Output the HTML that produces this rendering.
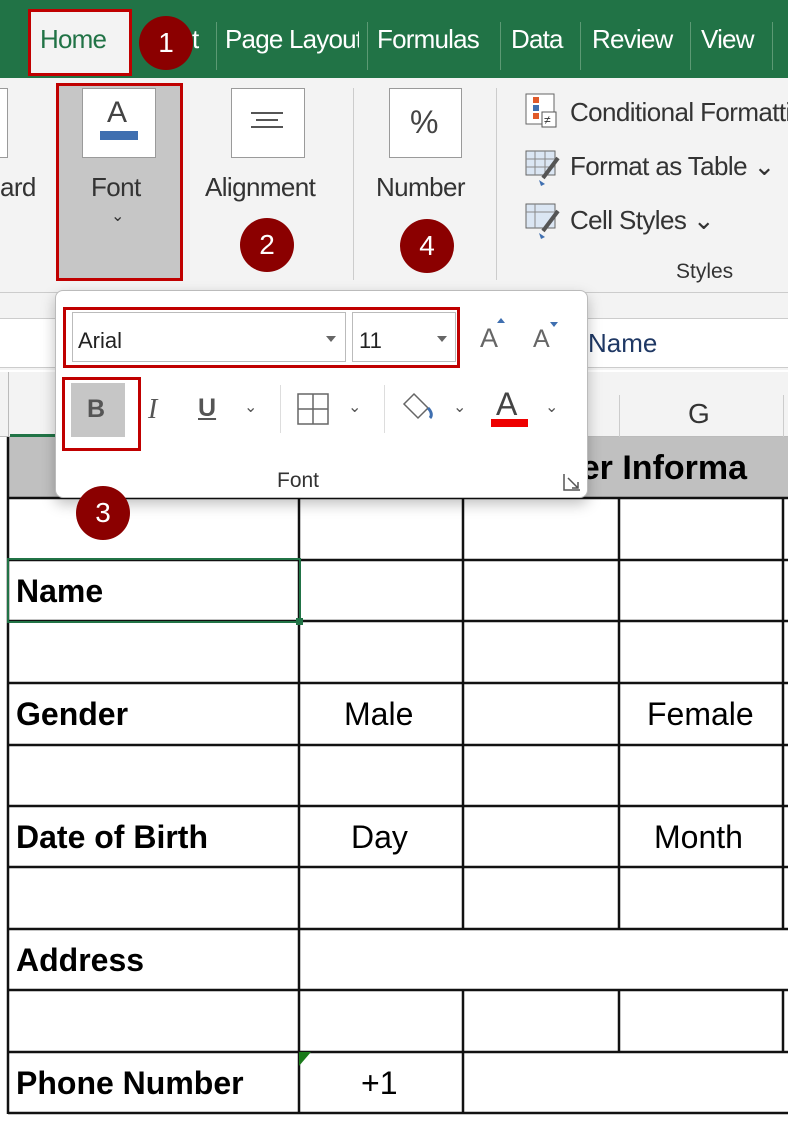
<!DOCTYPE html>
<html><head><meta charset="utf-8"><style>
*{margin:0;padding:0;box-sizing:border-box}
body{width:788px;height:1123px;position:relative;overflow:hidden;background:#fff;font-family:"Liberation Sans",Arial,sans-serif}
.a{position:absolute}
.tab{position:absolute;top:24px;color:#fff;font-size:26px;letter-spacing:-0.8px}
.sep{position:absolute;top:22px;width:1px;height:48px;background:#5c9a74}
.rl{position:absolute;font-size:26px;color:#333;letter-spacing:-0.6px}
.box{position:absolute;background:#fff;border:1px solid #9a9a9a}
.red{position:absolute;border:3px solid #c00000}
.circ{position:absolute;width:54px;height:54px;border-radius:50%;background:#8b0000;color:#fff;font-size:28px;text-align:center;line-height:54px}
.cell{position:absolute;font-size:32px;color:#000}
.b{font-weight:bold}
</style></head><body>
<!-- tab bar -->
<div class="a" style="left:0;top:0;width:788px;height:78px;background:#217346"></div>
<div class="a" style="left:29px;top:10px;width:100px;height:66px;background:#f3f3f3"></div>
<div class="tab" style="left:40px;color:#217346">Home</div>
<div class="red" style="left:28px;top:9px;width:104px;height:67px;border-width:3px"></div>
<div class="tab" style="left:192px">t</div>
<div class="sep" style="left:216px"></div>
<div class="tab" style="left:225px;width:134px;overflow:hidden;white-space:nowrap">Page Layout</div>
<div class="sep" style="left:367px"></div>
<div class="tab" style="left:377px">Formulas</div>
<div class="sep" style="left:500px"></div>
<div class="tab" style="left:511px">Data</div>
<div class="sep" style="left:580px"></div>
<div class="tab" style="left:592px">Review</div>
<div class="sep" style="left:690px"></div>
<div class="tab" style="left:701px">View</div>
<div class="sep" style="left:772px"></div>
<div class="circ" style="left:139px;top:16px">1</div>
<!-- ribbon -->
<div class="a" style="left:0;top:78px;width:788px;height:214px;background:#f3f3f3"></div>
<div class="box" style="left:-2px;top:88px;width:10px;height:70px"></div>
<div class="rl" style="left:0;top:172px">ard</div>
<div class="a" style="left:56px;top:84px;width:126px;height:196px;background:#c6c6c6"></div>
<div class="box" style="left:82px;top:88px;width:74px;height:70px"></div>
<div class="a" style="left:107px;top:96px;font-size:30px;color:#444">A</div>
<div class="a" style="left:100px;top:131px;width:38px;height:9px;background:#3f6fb0"></div>
<div class="rl" style="left:91px;top:172px">Font</div>
<div class="rl" style="left:111px;top:206px;font-size:16px">&#8964;</div>
<div class="red" style="left:56px;top:83px;width:127px;height:198px"></div>
<div class="box" style="left:231px;top:88px;width:74px;height:70px"></div>
<div class="a" style="left:251px;top:112px;width:32px;height:2px;background:#555"></div>
<div class="a" style="left:256px;top:119px;width:22px;height:2px;background:#555"></div>
<div class="a" style="left:251px;top:126px;width:32px;height:2px;background:#555"></div>
<div class="rl" style="left:205px;top:172px">Alignment</div>
<div class="circ" style="left:240px;top:218px">2</div>
<div class="a" style="left:353px;top:88px;width:1px;height:192px;background:#ccc"></div>
<div class="box" style="left:389px;top:88px;width:73px;height:70px"></div>
<div class="a" style="left:410px;top:104px;font-size:32px;color:#444">%</div>
<div class="rl" style="left:376px;top:172px">Number</div>
<div class="circ" style="left:400px;top:219px">4</div>
<div class="a" style="left:496px;top:88px;width:1px;height:192px;background:#ccc"></div>
<svg class="a" style="left:525px;top:93px" width="36" height="36"><rect x="1" y="1" width="28" height="30" fill="#fff" stroke="#666"/><rect x="8" y="4" width="6" height="6" fill="#e05a2a"/><rect x="8" y="12" width="6" height="6" fill="#3f6fb0"/><rect x="8" y="20" width="6" height="6" fill="#e05a2a"/><rect x="17" y="19" width="14" height="15" fill="#fff" stroke="#555"/><text x="19" y="31" font-size="12" fill="#333">≠</text></svg>
<div class="rl" style="left:570px;top:97px;white-space:nowrap">Conditional Formatting</div>
<svg class="a" style="left:525px;top:150px" width="36" height="36"><rect x="1" y="1" width="29" height="24" fill="#dbe6f3" stroke="#666"/><path d="M1 9h29M1 17h29M10 1v24M20 1v24" stroke="#888"/><path d="M33 8L18 28" stroke="#555" stroke-width="4"/><path d="M14 30l6 4-4 2z" fill="#3f6fb0"/></svg>
<div class="rl" style="left:570px;top:151px;white-space:nowrap">Format as Table &#8964;</div>
<svg class="a" style="left:525px;top:203px" width="36" height="36"><rect x="1" y="1" width="29" height="24" fill="#dbe6f3" stroke="#666"/><path d="M1 9h29M10 1v24" stroke="#888"/><path d="M33 8L18 28" stroke="#555" stroke-width="4"/><path d="M14 30l6 4-4 2z" fill="#3f6fb0"/></svg>
<div class="rl" style="left:570px;top:205px;white-space:nowrap">Cell Styles &#8964;</div>
<div class="a" style="left:676px;top:260px;font-size:21px;color:#333">Styles</div>
<!-- formula bar area -->
<div class="a" style="left:0;top:292px;width:788px;height:78px;background:#f3f3f3;border-top:1px solid #ccc"></div>
<div class="a" style="left:0;top:318px;width:788px;height:50px;background:#fff;border-top:1px solid #ccc;border-bottom:1px solid #ccc"></div>
<div class="a" style="left:588px;top:328px;font-size:26px;color:#1f3864">Name</div>
<!-- column header -->
<div class="a" style="left:0;top:372px;width:788px;height:65px;background:#f3f3f3;border-bottom:1px solid #bbb"></div>
<div class="a" style="left:8px;top:372px;width:1px;height:65px;background:#bbb"></div>
<div class="a" style="left:10px;top:434px;width:45px;height:3px;background:#217346"></div>
<div class="a" style="left:619px;top:395px;width:1px;height:42px;background:#ccc"></div>
<div class="a" style="left:783px;top:395px;width:1px;height:42px;background:#ccc"></div>
<div class="a" style="left:688px;top:398px;font-size:28px;color:#333">G</div>
<!-- sheet -->
<div class="a" style="left:8px;top:437px;width:780px;height:61px;background:#c0c0c0"></div>
<div class="a b" style="left:560px;top:449px;font-size:34px;white-space:nowrap">ner Informa</div>
<svg class="a" style="left:0;top:437px" width="788" height="686">
<g stroke="#111" stroke-width="2.5">
<path d="M8 0V677M299 61V677M463 61V492M463 553V677M619 61V492M619 553V615M783 61V492M783 553V615"/>
<path d="M8 61H788M8 123H788M8 184H788M8 246H788M8 308H788M8 369H788M8 430H788M8 492H788M8 553H788M8 615H788M8 676H788"/>
</g>
<path d="M299 615h12l-12 14z" fill="#1a7a1a"/>
</svg>
<div class="a" style="left:7px;top:558px;width:294px;height:65px;border:2.5px solid #217346"></div>
<div class="a" style="left:296px;top:618px;width:7px;height:7px;background:#217346"></div>
<div class="cell b" style="left:16px;top:573px">Name</div>
<div class="cell b" style="left:16px;top:696px">Gender</div>
<div class="cell" style="left:344px;top:696px">Male</div>
<div class="cell" style="left:647px;top:696px">Female</div>
<div class="cell b" style="left:16px;top:819px">Date of Birth</div>
<div class="cell" style="left:351px;top:819px">Day</div>
<div class="cell" style="left:654px;top:819px">Month</div>
<div class="cell b" style="left:16px;top:942px">Address</div>
<div class="cell b" style="left:16px;top:1065px">Phone Number</div>
<div class="cell" style="left:361px;top:1065px">+1</div>
<!-- popup -->
<div class="a" style="left:55px;top:290px;width:533px;height:208px;background:#fff;border:1px solid #bbb;border-radius:8px;box-shadow:0 6px 14px rgba(0,0,0,.25)"></div>
<div class="a" style="left:72px;top:312px;width:274px;height:50px;border:1px solid #bbb"></div>
<div class="a" style="left:78px;top:328px;font-size:22px;color:#222">Arial</div>
<div class="a" style="left:326px;top:336px;border:5px solid transparent;border-top:6px solid #666"></div>
<div class="a" style="left:352px;top:312px;width:104px;height:50px;border:1px solid #bbb"></div>
<div class="a" style="left:359px;top:328px;font-size:22px;color:#222">11</div>
<div class="a" style="left:437px;top:336px;border:5px solid transparent;border-top:6px solid #666"></div>
<div class="red" style="left:63px;top:307px;width:397px;height:61px"></div>
<div class="a" style="left:480px;top:323px;font-size:27px;color:#666">A</div>
<div class="a" style="left:497px;top:318px;border:4px solid transparent;border-bottom:5px solid #3f6fb0;border-top:0"></div>
<div class="a" style="left:533px;top:325px;font-size:25px;color:#666">A</div>
<div class="a" style="left:550px;top:322px;border:4px solid transparent;border-top:5px solid #3f6fb0;border-bottom:0"></div>
<div class="a" style="left:71px;top:383px;width:54px;height:54px;background:#c6c6c6"></div>
<div class="a b" style="left:87px;top:395px;font-size:25px;color:#555">B</div>
<div class="red" style="left:62px;top:377px;width:79px;height:74px"></div>
<div class="a" style="left:148px;top:394px;font-size:28px;font-style:italic;font-family:'Liberation Serif',serif;color:#555">I</div>
<div class="a b" style="left:198px;top:394px;font-size:25px;color:#555;text-decoration:underline">U</div>
<div class="a" style="left:244px;top:397px;font-size:16px;color:#555">&#8964;</div>
<div class="a" style="left:280px;top:385px;width:1px;height:48px;background:#ddd"></div>
<svg class="a" style="left:297px;top:393px" width="34" height="34"><rect x="1" y="1" width="30" height="30" fill="none" stroke="#666" stroke-width="1.5"/><path d="M16 1v30M1 16h30" stroke="#666" stroke-width="1.5"/></svg>
<div class="a" style="left:348px;top:397px;font-size:16px;color:#555">&#8964;</div>
<div class="a" style="left:384px;top:385px;width:1px;height:48px;background:#ddd"></div>
<svg class="a" style="left:402px;top:390px" width="36" height="36"><path d="M12 4l14 14-10 10-14-14z" fill="none" stroke="#666" stroke-width="1.5"/><path d="M26 18c4 4 4 8 2 10" stroke="#3f6fb0" stroke-width="3" fill="none"/></svg>
<div class="a" style="left:453px;top:397px;font-size:16px;color:#555">&#8964;</div>
<div class="a" style="left:496px;top:386px;font-size:32px;color:#444">A</div>
<div class="a" style="left:491px;top:419px;width:37px;height:8px;background:#e00"></div>
<div class="a" style="left:545px;top:397px;font-size:16px;color:#555">&#8964;</div>
<div class="a" style="left:277px;top:469px;font-size:21px;color:#333">Font</div>
<svg class="a" style="left:562px;top:472px" width="20" height="20"><path d="M2 2v16h16" fill="none" stroke="#555" stroke-width="1.5"/><path d="M6 6l10 10M16 10v6h-6" fill="none" stroke="#555" stroke-width="1.5"/></svg>
<div class="circ" style="left:76px;top:486px">3</div>
</body></html>
